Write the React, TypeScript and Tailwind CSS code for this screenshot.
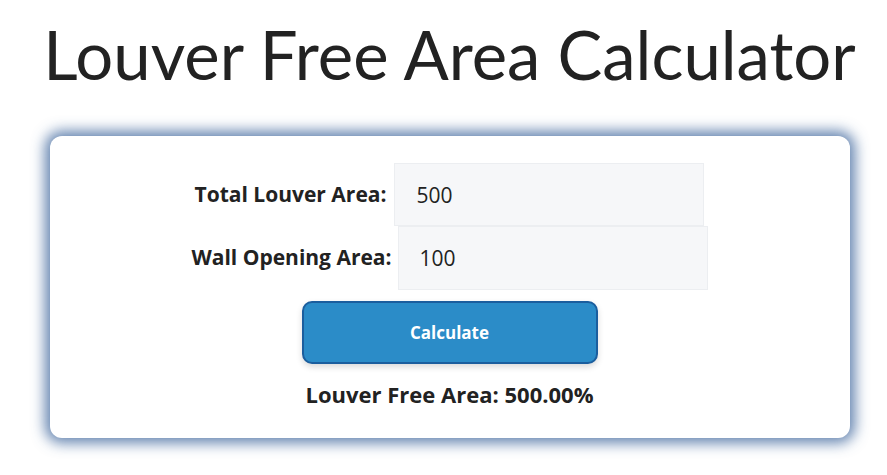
import React, { useState } from "react";

function App() {
  const [total, setTotal] = useState("500");
  const [wall, setWall] = useState("100");
  const [result, setResult] = useState("500.00");

  const calculate = () => {
    const t = parseFloat(total);
    const w = parseFloat(wall);
    if (!w) return;
    setResult(((t / w) * 100).toFixed(2));
  };

  return (
    <div className="min-h-screen bg-white pl-[12px] font-['Open_Sans',sans-serif] text-[#222]">
      <div className="flex flex-col items-center">
        <h1 className="mt-[13px] whitespace-nowrap font-['Lato',sans-serif] text-[67px] leading-[82px] font-normal text-[#222]">
          Louver Free Area Calculator
        </h1>

        <div className="mt-[41px] w-[800px] h-[302px] rounded-[12px] bg-white shadow-[0_0_14px_5px_rgba(60,100,155,0.8)] flex flex-col items-center pt-[27px]">
          <div className="flex items-center">
            <label className="text-[21px] font-bold mr-[8px]">Total Louver Area:</label>
            <input
              value={total}
              onChange={(e) => setTotal(e.target.value)}
              className="w-[310px] h-[63px] bg-[#f6f7f9] border border-[#eceef1] px-[21px] text-[21px] outline-none"
            />
          </div>
          <div className="flex items-center">
            <label className="text-[21px] font-bold mr-[6px]">Wall Opening Area:</label>
            <input
              value={wall}
              onChange={(e) => setWall(e.target.value)}
              className="w-[310px] h-[64px] bg-[#f6f7f9] border border-[#eceef1] px-[21px] text-[21px] outline-none"
            />
          </div>

          <button
            onClick={calculate}
            className="mt-[11px] w-[296px] h-[63px] rounded-[10px] bg-[#2b8cc8] border-2 border-[#1b5e9e] text-white text-[17px] font-bold shadow-[0_3px_6px_rgba(0,0,0,0.15)]"
          >
            Calculate
          </button>

          <p className="mt-[14px] text-[22px] font-bold">Louver Free Area: {result}%</p>
        </div>
      </div>
    </div>
  );
}

export default App;
